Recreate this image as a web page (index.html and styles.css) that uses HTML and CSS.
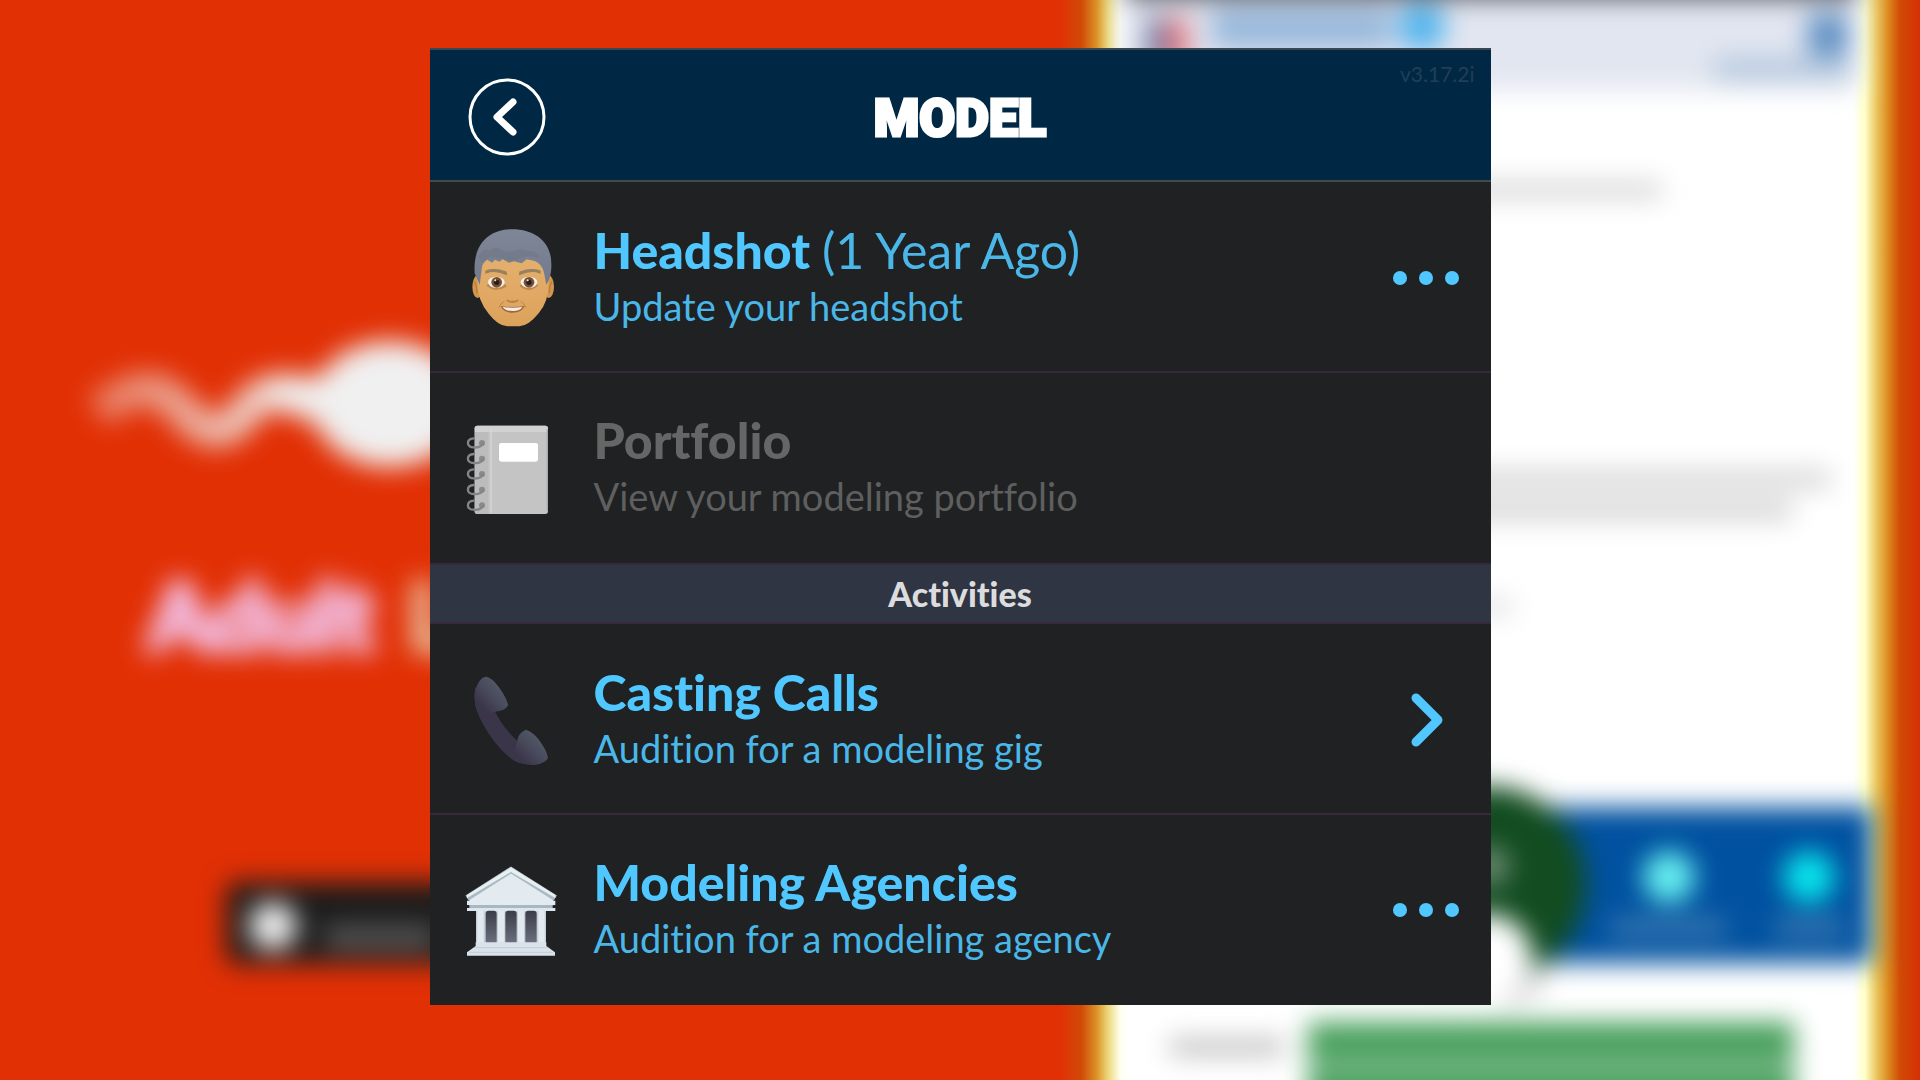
FILE: index.html
```
<!DOCTYPE html>
<html lang="en">
    <head>
        <meta charset="UTF-8">
        <meta name="viewport" content="width=device-width, initial-scale=1.0">
        <title>Model</title>
        <link rel="stylesheet" href="styles.css">
    </head>
    <body>
        <!-- Blurred backdrop -->
        <svg class="backdrop" viewBox="0 0 1920 1080" preserveAspectRatio="none" aria-hidden="true">
            <defs>
                <filter id="soft" x="-20%" y="-50%" width="140%" height="200%" color-interpolation-filters="sRGB"><feGaussianBlur stdDeviation="13"/></filter>
                <linearGradient id="phone" gradientUnits="userSpaceOnUse" x1="1060" y1="0" x2="1920" y2="0">
                    <stop offset="0" stop-color="#e23005"/>
                    <stop offset=".025" stop-color="#d04a08"/>
                    <stop offset=".043" stop-color="#dc9428"/>
                    <stop offset=".056" stop-color="#ecd87c"/>
                    <stop offset=".07" stop-color="#fffff0"/>
                    <stop offset=".08" stop-color="#ffffff"/>
                    <stop offset=".922" stop-color="#ffffff"/>
                    <stop offset=".936" stop-color="#ffffc8"/>
                    <stop offset=".95" stop-color="#eac45c"/>
                    <stop offset=".963" stop-color="#dc8a20"/>
                    <stop offset=".977" stop-color="#d04a05"/>
                    <stop offset="1" stop-color="#d53004"/>
                </linearGradient>
                <linearGradient id="tail" x1="0" y1="0" x2="1" y2="0">
                    <stop offset="0" stop-color="#f0f0f0" stop-opacity=".4"/>
                    <stop offset="1" stop-color="#f0f0f0"/>
                </linearGradient>
            </defs>
            <rect width="1920" height="1080" fill="#e23005"/>
            <rect x="1060" width="860" height="1080" fill="url(#phone)"/>
            <g filter="url(#soft)">
                <path d="M98 412C145 374 165 390 190 418Q220 446 246 410Q272 376 320 400" fill="none" stroke="url(#tail)" stroke-width="34"/>
                <ellipse cx="390" cy="404" rx="78" ry="63" fill="#f0f0f0"/>
                <path d="M270 388L330 374V434Q305 414 270 410Z" fill="#f0f0f0"/>
                <text x="148" y="650" class="promo" fill="#f4c8f4" stroke="#f4c8f4">Adult</text>
                <text x="408" y="650" class="promo" fill="#e8c8a8" stroke="#e8c8a8">Life</text>
                <rect x="226" y="882" width="280" height="82" rx="12" fill="#1c1c1c"/>
                <circle cx="273" cy="926" r="24" fill="#f0f0f0"/>
                <rect x="325" y="925" width="110" height="25" fill="#555"/>
            </g>
            <g filter="url(#soft)">
                <rect x="1124" y="-60" width="734" height="150" fill="#e2e6f0"/>
                <rect x="1146" y="18" width="20" height="54" fill="#7880a8"/>
                <rect x="1166" y="18" width="22" height="54" fill="#e47880"/>
                <rect x="1212" y="8" width="180" height="40" fill="#98b8dc"/>
                <circle cx="1422" cy="27" r="24" fill="#52b4ee"/>
                <rect x="1808" y="14" width="40" height="42" fill="#6090c4"/>
                <rect x="1715" y="58" width="135" height="22" fill="#b4c8de"/>
                <rect x="1124" y="-40" width="734" height="38" fill="#50545e"/>
                <rect x="1440" y="182" width="222" height="16" fill="#d4d4d4"/>
                <rect x="1440" y="470" width="390" height="18" fill="#d4d4d4"/>
                <rect x="1440" y="500" width="352" height="20" fill="#d4d4d4"/>
                <rect x="1470" y="600" width="42" height="14" fill="#ddd"/>
            </g>
            <g filter="url(#soft)">
                <rect x="1500" y="807" width="372" height="156" fill="#0051a0"/>
                <rect x="1610" y="918" width="116" height="20" fill="#3878b0"/>
                <rect x="1775" y="918" width="70" height="20" fill="#3878b0"/>
                <circle cx="1669" cy="877" r="26" fill="#66f0f0"/>
                <circle cx="1809" cy="877" r="26" fill="#08e4ec"/>
                <circle cx="1508" cy="968" r="36" fill="#ccc"/>
                <circle cx="1488" cy="884" r="98" fill="#124c20"/>
                <circle cx="1490" cy="866" r="20" fill="#6a8a70"/>
                <circle cx="1488" cy="958" r="44" fill="#fff"/>
                <rect x="1308" y="1022" width="486" height="90" fill="#47a05c"/>
                <rect x="1308" y="1062" width="486" height="8" fill="#b8d4c0"/>
                <rect x="1170" y="1039" width="114" height="16" fill="#bbb"/>
            </g>
        </svg>

        <main class="card">
            <header class="card-header">
                <button class="back" aria-label="Back">
                    <svg viewBox="0 0 78 78"><circle cx="39" cy="39" r="37"/><path d="M45 24L29 39L45 54"/></svg>
                </button>
                <h1>MODEL</h1>
                <span class="version">v3.17.2i</span>
            </header>

            <button class="row">
                <svg class="icon" viewBox="66 54 300 300">
                    <defs>
                        <linearGradient id="skin" x1="0" y1="0" x2="0" y2="1"><stop offset="0" stop-color="#e6b271"/><stop offset="1" stop-color="#dca25b"/></linearGradient>
                        <linearGradient id="hair" x1="0" y1="0" x2="0" y2="1"><stop offset="0" stop-color="#7f8697"/><stop offset="1" stop-color="#737a8b"/></linearGradient>
                    </defs>
                    <ellipse cx="113" cy="230" rx="16" ry="34" fill="#d3964f"/>
                    <ellipse cx="326" cy="230" rx="16" ry="34" fill="#d3964f"/>
                    <path d="M103 214Q111 226 111 250" fill="none" stroke="#b87c3c" stroke-width="4"/>
                    <path d="M336 214Q328 226 328 250" fill="none" stroke="#b87c3c" stroke-width="4"/>
                    <path d="M112 170Q112 100 220 100Q325 100 326 170V220Q326 275 296 310Q264 349 238 349H202Q174 347 146 311Q112 270 112 220Z" fill="url(#skin)"/>
                    <path d="M119 224L104 190C98 100 150 58 215 58C290 58 334 100 334 160Q336 200 319 224L312 188Q306 162 284 153L260 148L245 160L222 154L207 158L188 148L178 155L165 149L156 158L142 149Q124 160 125 180Z" fill="url(#hair)"/>
                    <path d="M116 142Q128 110 146 122Q170 106 184 120Q202 130 219 124Q242 113 262 123Q287 120 300 145Q263 133 239 145Q210 158 184 145Q145 134 125 158Z" fill="#6b7283" opacity=".4"/>
                    <path d="M138 189Q163 178 199 193L198 186Q163 173 138 183Z" fill="#98815f" stroke="#98815f" stroke-width="4"/>
                    <path d="M300 189Q275 178 239 193L240 186Q275 173 300 183Z" fill="#98815f" stroke="#98815f" stroke-width="4"/>
                    <path d="M142 224Q168 246 198 226M241 226Q266 246 292 224" fill="none" stroke="#bd884c" stroke-width="8"/>
                    <ellipse cx="169" cy="217" rx="25" ry="17" fill="#f5eeea"/>
                    <ellipse cx="267" cy="217" rx="25" ry="17" fill="#f5eeea"/>
                    <circle cx="170" cy="217" r="16" fill="#765033"/>
                    <circle cx="267" cy="217" r="16" fill="#765033"/>
                    <circle cx="170" cy="217" r="8" fill="#271d18"/>
                    <circle cx="267" cy="217" r="8" fill="#271d18"/>
                    <circle cx="166" cy="211" r="3" fill="#eee"/>
                    <circle cx="263" cy="211" r="3" fill="#eee"/>
                    <path d="M200 268Q218 277 235 268L235 274Q218 284 200 274Z" fill="#bd8143"/>
                    <path d="M193 274Q181 280 177 293M242 274Q253 280 258 293" fill="none" stroke="#bf8548" stroke-width="3"/>
                    <path d="M182 288Q218 294 254 288Q246 308 218 308Q190 308 182 288Z" fill="#a4643b"/>
                    <path d="M188 291Q218 295 247 291Q241 303 218 303Q195 303 188 291Z" fill="#f4efea"/>
                </svg>
                <span class="text">
                    <span class="title">Headshot <span class="note">(1 Year Ago)</span></span>
                    <span class="subtitle">Update your headshot</span>
                </span>
                <svg class="dots" viewBox="0 0 66 14"><circle cx="7" cy="7" r="7"/><circle cx="33" cy="7" r="7"/><circle cx="59" cy="7" r="7"/></svg>
            </button>

            <button class="row" disabled>
                <svg class="icon" viewBox="66 54 300 300">
                    <rect x="104" y="77" width="220" height="265" rx="8" fill="#c4c4c4"/>
                    <path d="M112 77H316Q324 77 324 87V96H104V85Q104 77 112 77Z" fill="#d2d2d2"/>
                    <path d="M104 96H145V342H112Q104 342 104 334Z" fill="#bcbcbc"/>
                    <path d="M153 88V340" stroke="#d8d8d8" stroke-width="4"/>
                    <path d="M322 88V334" stroke="#aaa" stroke-width="4"/>
                    <rect x="177" y="129" width="117" height="56" rx="7" fill="#fff"/>
                    <g fill="#8a8a8a">
                        <circle cx="126" cy="129" r="9"/><circle cx="126" cy="176" r="9"/><circle cx="126" cy="222" r="9"/><circle cx="126" cy="269" r="9"/><circle cx="126" cy="316" r="9"/>
                    </g>
                    <g fill="none" stroke="#858585" stroke-width="7" stroke-linecap="round">
                        <path d="M101 115C78 117 78 142 101 142Q120 145 129 131"/>
                        <path d="M101 162C78 164 78 189 101 189Q120 192 129 178"/>
                        <path d="M101 208C78 210 78 235 101 235Q120 238 129 224"/>
                        <path d="M101 255C78 257 78 282 101 282Q120 285 129 271"/>
                        <path d="M101 302C78 304 78 329 101 329Q120 332 129 318"/>
                    </g>
                </svg>
                <span class="text">
                    <span class="title">Portfolio</span>
                    <span class="subtitle">View your modeling portfolio</span>
                </span>
            </button>

            <h2 class="section">Activities</h2>

            <button class="row">
                <svg class="icon" viewBox="66 57 300 300">
                    <defs>
                        <linearGradient id="cup" x1=".8" y1=".2" x2=".2" y2=".8"><stop offset="0" stop-color="#525b69"/><stop offset=".5" stop-color="#484b5b"/><stop offset="1" stop-color="#3b354a"/></linearGradient>
                    </defs>
                    <path d="M106 108Q98 150 112 183C133 239 181 302 222 329Q250 344 287 341L232 270Q186 226 166 182Z" fill="#3b354a"/>
                    <path d="M137 77Q148 77 162 91Q193 125 205 162Q195 180 166 182Q145 192 112 183Q94 130 116 94Q126 78 137 77Z" fill="url(#cup)"/>
                    <path d="M258 236Q284 244 307 281Q322 304 324 322Q310 341 276 342Q244 342 218 323L232 268Q236 244 258 236Z" fill="url(#cup)"/>
                </svg>
                <span class="text">
                    <span class="title">Casting Calls</span>
                    <span class="subtitle">Audition for a modeling gig</span>
                </span>
                <svg class="chevron" viewBox="0 0 32 54"><path d="M5 5L27 27L5 49"/></svg>
            </button>

            <button class="row">
                <svg class="icon" viewBox="66 60 300 300">
                    <defs>
                        <linearGradient id="door" x1="0" y1="0" x2="0" y2="1"><stop offset="0" stop-color="#3b3d49"/><stop offset="1" stop-color="#6e7180"/></linearGradient>
                    </defs>
                    <path d="M108 208H318V318H108Z" fill="#c4cfd8"/>
                    <path d="M213 92L340 178V196H88V178Z" fill="#e3ebf0"/>
                    <path d="M81 174L213 90L346 174" fill="none" stroke="#aab9c2" stroke-width="18"/>
                    <path d="M81 165L213 82L346 165V174L213 96L81 174Z" fill="#e8eff3"/>
                    <path d="M81 182H92L213 113L334 182H346V195H81Z" fill="#e3ebf0"/>
                    <path d="M88 195H338V205H88Z" fill="#a8b8c2"/>
                    <path d="M81 204H346V213H81Z" fill="#dce6ec"/>
                    <g fill="url(#door)">
                        <rect x="137" y="212" width="33" height="103" rx="9"/><rect x="196" y="212" width="34" height="103" rx="9"/><rect x="256" y="212" width="34" height="103" rx="9"/>
                    </g>
                    <path d="M112 212H131V308H112ZM174 212H193V308H174ZM234 212H252V308H234ZM295 212H314V308H295Z" fill="#e2eaf0"/>
                    <path d="M107 307H319V318L345 337V347H81V337L107 318Z" fill="#dbe3ea"/>
                    <path d="M102 323H325M88 337H338" stroke="#c2cdd7" stroke-width="3"/>
                </svg>
                <span class="text">
                    <span class="title">Modeling Agencies</span>
                    <span class="subtitle">Audition for a modeling agency</span>
                </span>
                <svg class="dots" viewBox="0 0 66 14"><circle cx="7" cy="7" r="7"/><circle cx="33" cy="7" r="7"/><circle cx="59" cy="7" r="7"/></svg>
            </button>
        </main>
    </body>
</html>
```
FILE: styles.css
```
* {
    box-sizing: border-box;
}
body {
    margin: 0;
    min-height: 100vh;
    background-color: #e23005;
    font-family: Lato, "Open Sans", sans-serif;
    font-variant-ligatures: none;
}
.backdrop {
    position: fixed;
    inset: 0;
    width: 100%;
    height: 100%;
    z-index: -1;
}
.promo {
    font-size: 92px;
    font-weight: 900;
    stroke-width: 6px;
}
.card {
    margin: 0 auto;
    padding: 48px 0 76px;
    width: calc(100% - 859px);
    min-width: 640px;
}
.card-header {
    position: relative;
    display: flex;
    align-items: center;
    justify-content: center;
    min-height: 134px;
    padding-top: 4px;
    background-color: #002845;
    border-top: 2px solid #3c4650;
    border-bottom: 2px solid #45494b;
}
.card-header h1 {
    margin: 0;
    padding-top: 4px;
    color: #fff;
    font-family: Roboto, sans-serif;
    font-size: 52px;
    font-weight: 900;
    line-height: 64px;
    -webkit-text-stroke: 3px #fff;
}
.back {
    position: absolute;
    left: 38px;
    width: 78px;
    height: 78px;
    padding: 0;
    border: none;
    background: none;
    cursor: pointer;
}
.back svg {
    display: block;
    fill: none;
    stroke: #fff;
    stroke-width: 3;
}
.back path {
    stroke-width: 7;
    stroke-linecap: round;
    stroke-linejoin: round;
}
.version {
    position: absolute;
    top: 12px;
    right: 16px;
    color: #203f58;
    font-size: 21px;
    line-height: 24px;
}
.row {
    display: flex;
    align-items: center;
    gap: 32px;
    width: 100%;
    min-height: 191px;
    padding: 3px 32px 0;
    border: none;
    border-bottom: 2px solid #35293a;
    background-color: #1f2122;
    color: #50c8ff;
    font-family: inherit;
    font-variant-ligatures: inherit;
    text-align: left;
    cursor: pointer;
}
.row:disabled,
.row:last-child {
    min-height: 190px;
    padding-top: 0;
    border-bottom: none;
}
.row:disabled {
    color: #666;
    cursor: default;
}
.icon {
    flex: none;
    width: 100px;
    height: 100px;
}
.text {
    flex: 1;
    padding-bottom: 4px;
}
.title,
.subtitle {
    display: block;
}
.title {
    font-size: 50px;
    font-weight: 900;
    line-height: 60px;
}
.note {
    font-weight: 400;
}
.note,
.subtitle {
    opacity: .9;
}
.subtitle {
    font-size: 38px;
    font-weight: 400;
    line-height: 52px;
}
.dots {
    flex: none;
    width: 66px;
    fill: #50c8ff;
}
.chevron {
    flex: none;
    width: 32px;
    margin-right: 16px;
    fill: none;
    stroke: #50c8ff;
    stroke-width: 9;
    stroke-linecap: round;
    stroke-linejoin: round;
}
.section {
    margin: 0;
    border-top: 2px solid #35293a;
    border-bottom: 2px solid #35293a;
    background-color: #2f3542;
    color: #dcdcde;
    font-size: 34px;
    font-weight: 900;
    line-height: 57px;
    text-align: center;
}
```
